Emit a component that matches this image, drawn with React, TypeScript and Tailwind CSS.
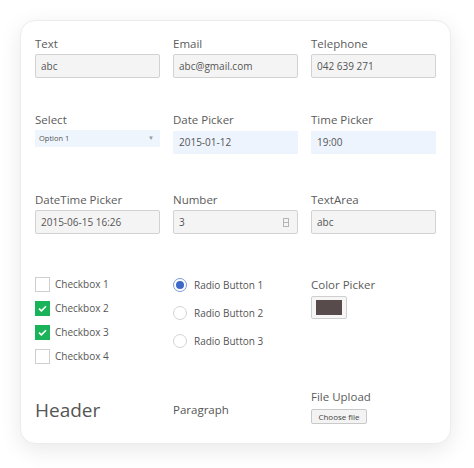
import React from "react";

const font = { fontFamily: '"Open Sans", "Noto Sans", sans-serif' };

function Label({ children }: { children: React.ReactNode }) {
  return <div className="text-[11.5px] leading-[18px] text-[#5b5b5b]">{children}</div>;
}

function Input({ value, children }: { value: string; children?: React.ReactNode }) {
  return (
    <div className="mt-[1px] h-[24px] w-full rounded-[2px] border border-[#d2d2d2] bg-[#f4f4f4] px-[5px] flex items-center justify-between text-[10px] text-[#555]">
      <span>{value}</span>
      {children}
    </div>
  );
}

function Check({ checked, label }: { checked: boolean; label: string }) {
  return (
    <div className="flex h-[15px] items-center gap-[5px]">
      {checked ? (
        <div className="flex h-[15px] w-[15px] items-center justify-center bg-[#1bb35a]">
          <svg width="9" height="7" viewBox="0 0 9 7">
            <path d="M1 3.6 L3.4 5.8 L8 1.2" fill="none" stroke="white" strokeWidth="1.6" />
          </svg>
        </div>
      ) : (
        <div className="h-[15px] w-[15px] border border-[#cfcfcf] bg-white" />
      )}
      <span className="text-[10px] text-[#555]">{label}</span>
    </div>
  );
}

function Radio({ checked, label }: { checked: boolean; label: string }) {
  return (
    <div className="flex h-[14px] items-center gap-[7px]">
      {checked ? (
        <div className="flex h-[14px] w-[14px] items-center justify-center rounded-full border border-[#7d9bd6] bg-white">
          <div className="h-[8px] w-[8px] rounded-full bg-[#3c68c8]" />
        </div>
      ) : (
        <div className="h-[14px] w-[14px] rounded-full border border-[#d4d4d4] bg-white" />
      )}
      <span className="text-[10px] text-[#555]">{label}</span>
    </div>
  );
}

export default function App() {
  return (
    <div className="h-[468px] w-[474px] bg-white pl-[20px] pt-[20px]" style={font}>
      <div className="h-[424px] w-[431px] rounded-[15px] border border-[#ececec] bg-white px-[14px] pt-[14px] shadow-[0_6px_22px_rgba(0,0,0,0.09)]">
        {/* Row 1 */}
        <div className="grid grid-cols-[125px_125px_125px] gap-x-[13px]">
          <div>
            <Label>Text</Label>
            <Input value="abc" />
          </div>
          <div>
            <Label>Email</Label>
            <Input value="abc@gmail.com" />
          </div>
          <div>
            <Label>Telephone</Label>
            <Input value="042 639 271" />
          </div>
        </div>
        {/* Row 2 */}
        <div className="mt-[33px] grid grid-cols-[125px_125px_125px] gap-x-[13px]">
          <div>
            <Label>Select</Label>
            <div className="mt-[1px] flex h-[17px] items-center justify-between bg-[#eef5fd] pl-[4px] pr-[6px] text-[7.5px] text-[#555]">
              <span>Option 1</span>
              <span className="text-[6px] text-[#999]">▼</span>
            </div>
          </div>
          <div>
            <Label>Date Picker</Label>
            <div className="mt-[2px] flex h-[23px] items-center bg-[#edf4fd] px-[6px] text-[10px] text-[#555]">2015-01-12</div>
          </div>
          <div>
            <Label>Time Picker</Label>
            <div className="mt-[2px] flex h-[23px] items-center bg-[#edf4fd] px-[6px] text-[10px] text-[#555]">19:00</div>
          </div>
        </div>
        {/* Row 3 */}
        <div className="mt-[37px] grid grid-cols-[125px_125px_125px] gap-x-[13px]">
          <div>
            <Label>DateTime Picker</Label>
            <Input value="2015-06-15 16:26" />
          </div>
          <div>
            <Label>Number</Label>
            <Input value="3">
              <svg width="6" height="9" viewBox="0 0 6 9" className="mr-[3px]">
                <rect x="0.5" y="0.5" width="5" height="8" fill="none" stroke="#b5b5b5" strokeWidth="1" />
                <line x1="1" y1="4.5" x2="5" y2="4.5" stroke="#b5b5b5" strokeWidth="1" />
              </svg>
            </Input>
          </div>
          <div>
            <Label>TextArea</Label>
            <Input value="abc" />
          </div>
        </div>
        {/* Row 4 */}
        <div className="mt-[42px] grid grid-cols-[125px_125px_125px] gap-x-[13px]">
          <div className="mt-[1px] flex flex-col gap-[9px]">
            <Check checked={false} label="Checkbox 1" />
            <Check checked={true} label="Checkbox 2" />
            <Check checked={true} label="Checkbox 3" />
            <Check checked={false} label="Checkbox 4" />
          </div>
          <div className="mt-[2px] flex flex-col gap-[14px]">
            <Radio checked={true} label="Radio Button 1" />
            <Radio checked={false} label="Radio Button 2" />
            <Radio checked={false} label="Radio Button 3" />
          </div>
          <div>
            <Label>Color Picker</Label>
            <div className="mt-[2px] flex h-[23px] w-[36px] items-center justify-center rounded-[2px] border border-[#cfcfcf] bg-[#f6f6f6]">
              <div className="h-[15px] w-[26px] bg-[#574b4c]" />
            </div>
          </div>
        </div>
        {/* Row 5 */}
        <div className="mt-[24px] grid grid-cols-[125px_125px_125px] gap-x-[13px]">
          <div className="mt-[9px] text-[19px] leading-[26px] text-[#555]">Header</div>
          <div className="mt-[14px] text-[11.5px] leading-[16px] text-[#555]">Paragraph</div>
          <div>
            <Label>File Upload</Label>
            <div className="mt-[3px] flex h-[15px] w-[56px] items-center justify-center rounded-[2px] border border-[#c9c9c9] bg-[#f3f3f3] text-[8px] text-[#444]">
              Choose file
            </div>
          </div>
        </div>
      </div>
    </div>
  );
}
